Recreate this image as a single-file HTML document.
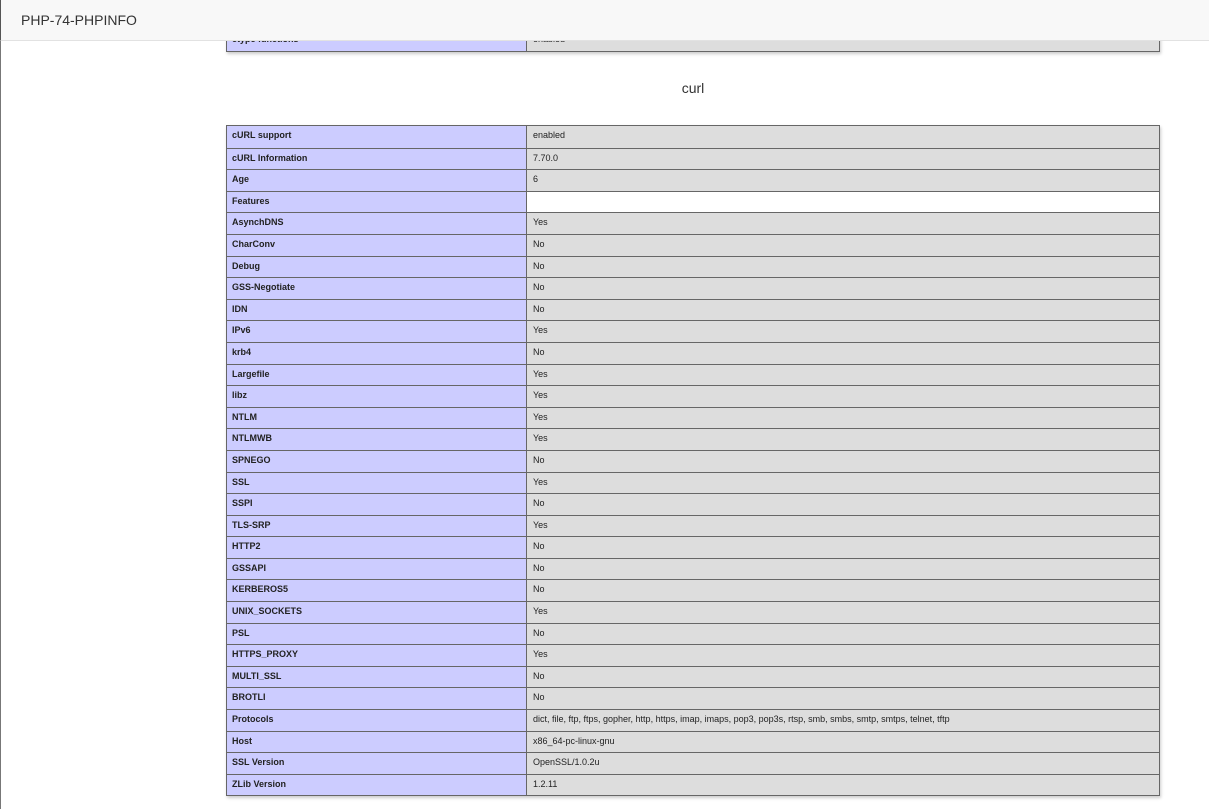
<!DOCTYPE html>
<html><head><meta charset="utf-8"><style>
body{margin:0;width:1209px;height:809px;overflow:hidden;background:#fff;font-family:"Liberation Sans",Arial,sans-serif;position:relative}
.hdr{position:absolute;left:0;top:0;width:1209px;height:41px;background:#f8f8f8;border-bottom:1px solid #e2e2e2;box-sizing:border-box;border-left:1px solid #555}
.hdr span{position:absolute;left:20px;top:12px;font-size:14px;color:#333}
.lb{position:absolute;left:0;top:41px;width:1px;height:768px;background:#777}
.t{position:absolute;left:226px;width:934px;border:1px solid #666;box-sizing:border-box;box-shadow:1px 2px 3px #ccc}
.r{display:flex;height:21.6px;border-top:1px solid #666;box-sizing:border-box;font-size:9px;color:#000}
.r:first-child{border-top:none}
.e{width:300px;background:#ccf;border-right:1px solid #666;padding-left:5px;line-height:19px;font-weight:bold;color:#222;box-sizing:border-box}
.v{flex:1;background:#ddd;padding-left:6px;line-height:19px;color:#222}
.w{background:#fff}
h2{position:absolute;left:0;width:1386px;top:80px;margin:0;text-align:center;font-size:14px;font-weight:normal;color:#333}
</style></head><body>
<div class="t" style="top:20px;height:32px;border-top:none"><div class="r" style="height:31px"><div class="e" style="line-height:38px">ctype functions</div><div class="v" style="line-height:38px">enabled</div></div></div>
<div class="hdr"><span>PHP-74-PHPINFO</span></div>
<div class="lb"></div>
<h2>curl</h2>
<div class="t" style="top:125px">
<div class="r"><div class="e">cURL support</div><div class="v">enabled</div></div>
<div class="r"><div class="e">cURL Information</div><div class="v">7.70.0</div></div>
<div class="r"><div class="e">Age</div><div class="v">6</div></div>
<div class="r"><div class="e">Features</div><div class="v w"></div></div>
<div class="r"><div class="e">AsynchDNS</div><div class="v">Yes</div></div>
<div class="r"><div class="e">CharConv</div><div class="v">No</div></div>
<div class="r"><div class="e">Debug</div><div class="v">No</div></div>
<div class="r"><div class="e">GSS-Negotiate</div><div class="v">No</div></div>
<div class="r"><div class="e">IDN</div><div class="v">No</div></div>
<div class="r"><div class="e">IPv6</div><div class="v">Yes</div></div>
<div class="r"><div class="e">krb4</div><div class="v">No</div></div>
<div class="r"><div class="e">Largefile</div><div class="v">Yes</div></div>
<div class="r"><div class="e">libz</div><div class="v">Yes</div></div>
<div class="r"><div class="e">NTLM</div><div class="v">Yes</div></div>
<div class="r"><div class="e">NTLMWB</div><div class="v">Yes</div></div>
<div class="r"><div class="e">SPNEGO</div><div class="v">No</div></div>
<div class="r"><div class="e">SSL</div><div class="v">Yes</div></div>
<div class="r"><div class="e">SSPI</div><div class="v">No</div></div>
<div class="r"><div class="e">TLS-SRP</div><div class="v">Yes</div></div>
<div class="r"><div class="e">HTTP2</div><div class="v">No</div></div>
<div class="r"><div class="e">GSSAPI</div><div class="v">No</div></div>
<div class="r"><div class="e">KERBEROS5</div><div class="v">No</div></div>
<div class="r"><div class="e">UNIX_SOCKETS</div><div class="v">Yes</div></div>
<div class="r"><div class="e">PSL</div><div class="v">No</div></div>
<div class="r"><div class="e">HTTPS_PROXY</div><div class="v">Yes</div></div>
<div class="r"><div class="e">MULTI_SSL</div><div class="v">No</div></div>
<div class="r"><div class="e">BROTLI</div><div class="v">No</div></div>
<div class="r"><div class="e">Protocols</div><div class="v">dict, file, ftp, ftps, gopher, http, https, imap, imaps, pop3, pop3s, rtsp, smb, smbs, smtp, smtps, telnet, tftp</div></div>
<div class="r"><div class="e">Host</div><div class="v">x86_64-pc-linux-gnu</div></div>
<div class="r"><div class="e">SSL Version</div><div class="v">OpenSSL/1.0.2u</div></div>
<div class="r"><div class="e">ZLib Version</div><div class="v">1.2.11</div></div>
</div>
</body></html>
